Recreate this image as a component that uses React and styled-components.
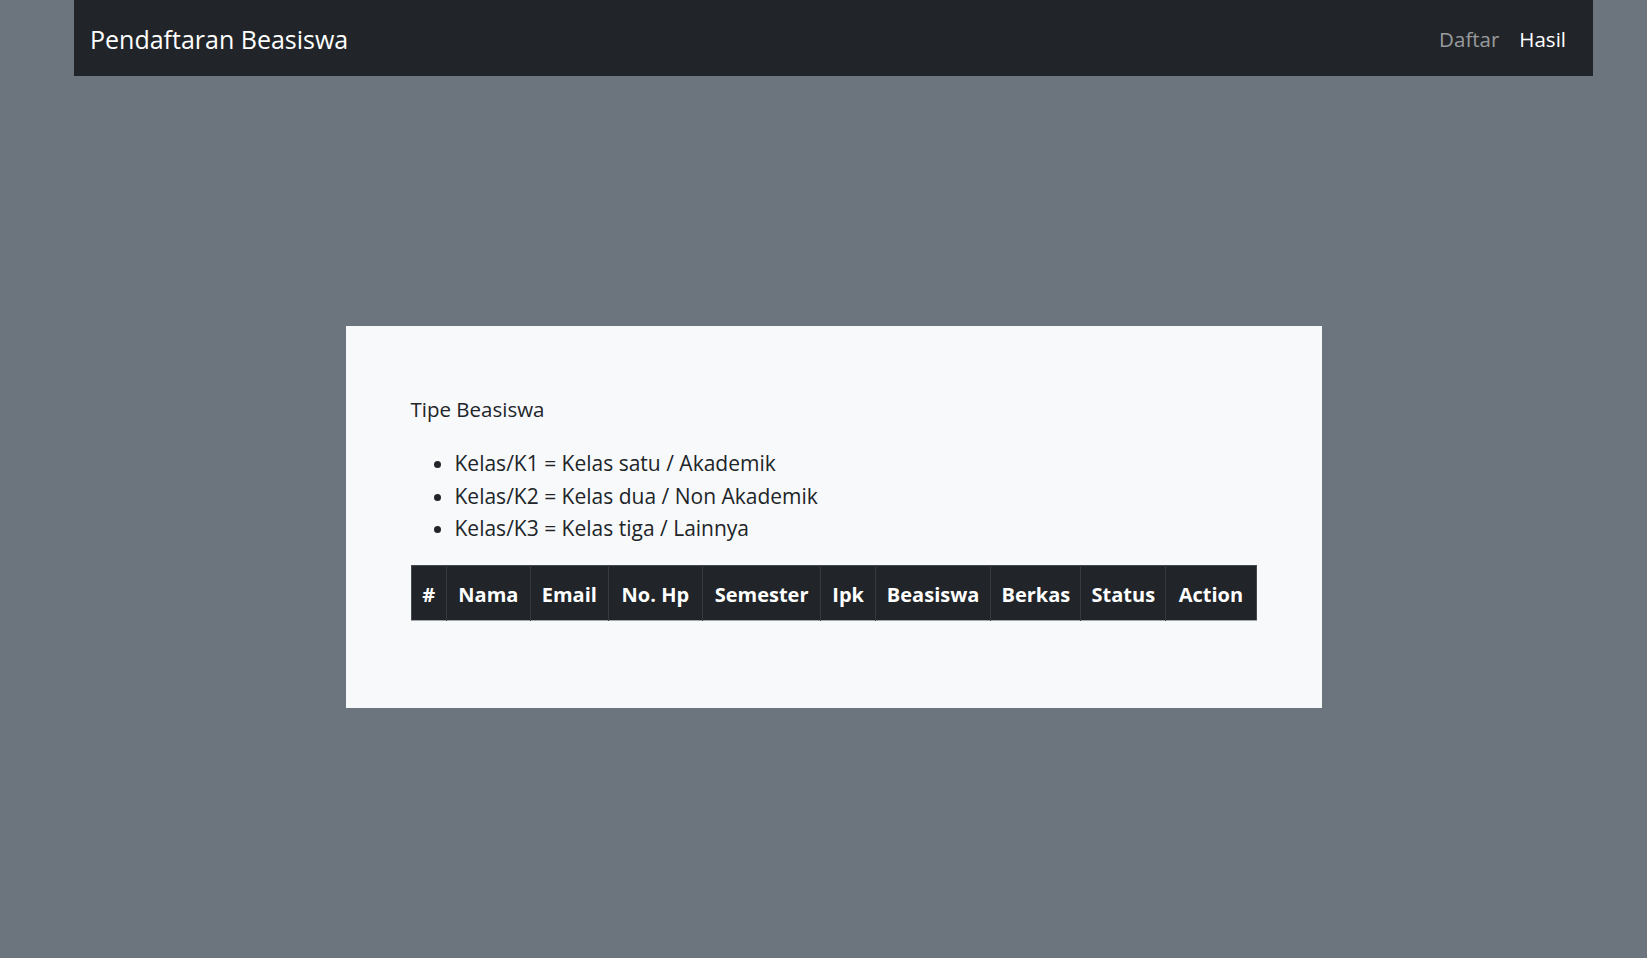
import styled, { createGlobalStyle } from "styled-components";

const GlobalStyle = createGlobalStyle`
  html, body {
    margin: 0;
    padding: 0;
    background: #6c757d;
    font-family: "Open Sans", "Noto Sans", sans-serif;
    color: #212529;
  }
`;

const Page = styled.div`
  width: 1519px;
  margin-left: 74px;
  min-height: 958px;
`;

const Navbar = styled.nav`
  height: 76px;
  background: #212529;
  display: flex;
  align-items: center;
  justify-content: space-between;
  padding: 2px 17px 0 16px;
  box-sizing: border-box;
`;

const Brand = styled.a`
  color: #fff;
  font-size: 25px;
  text-decoration: none;
`;

const NavLinks = styled.ul`
  list-style: none;
  margin: 0;
  padding: 0;
  display: flex;
`;

const NavLink = styled.li`
  font-size: 20.5px;
  padding: 0 10px;
  color: ${(p) => (p.$active ? "#fff" : "rgba(255,255,255,0.55)")};
`;

const Main = styled.main`
  display: flex;
  justify-content: center;
  padding-top: 250px;
`;

const Card = styled.section`
  width: 976px;
  height: 382px;
  background: #f8f9fa;
  box-sizing: border-box;
  padding: 67px 65px 0 65px;
`;

const Heading = styled.p`
  font-size: 20.5px;
  line-height: 32px;
  margin: 0 0 22px;
`;

const TypeList = styled.ul`
  margin: 0 0 20px;
  padding-left: 44px;
  font-size: 21px;
  line-height: 32.5px;
`;

const Table = styled.table`
  width: 846px;
  border-collapse: collapse;
  table-layout: fixed;
  background: #212529;
  color: #fff;
  border: 1px solid #454a4f;
  border-bottom: 1px solid #a3a7ab;
`;

const HeadCell = styled.th`
  width: ${(p) => p.$w}px;
  height: 55px;
  padding: 3px 0 0;
  box-sizing: border-box;
  font-size: 20px;
  font-weight: 700;
  text-align: center;
  border-left: 1px solid #373b3e;
  &:first-child {
    border-left: none;
  }
`;

const columns = [
  ["#", 35],
  ["Nama", 83],
  ["Email", 77],
  ["No. Hp", 93],
  ["Semester", 117],
  ["Ipk", 54],
  ["Beasiswa", 114],
  ["Berkas", 89],
  ["Status", 84],
  ["Action", 89],
];

const App = () => {
  return (
    <Page>
      <GlobalStyle />
      <Navbar>
        <Brand href="#">Pendaftaran Beasiswa</Brand>
        <NavLinks>
          <NavLink>Daftar</NavLink>
          <NavLink $active>Hasil</NavLink>
        </NavLinks>
      </Navbar>
      <Main>
        <Card>
          <Heading>Tipe Beasiswa</Heading>
          <TypeList>
            <li>Kelas/K1 = Kelas satu / Akademik</li>
            <li>Kelas/K2 = Kelas dua / Non Akademik</li>
            <li>Kelas/K3 = Kelas tiga / Lainnya</li>
          </TypeList>
          <Table>
            <thead>
              <tr>
                {columns.map(([label, w]) => (
                  <HeadCell key={label} $w={w}>
                    {label}
                  </HeadCell>
                ))}
              </tr>
            </thead>
            <tbody></tbody>
          </Table>
        </Card>
      </Main>
    </Page>
  );
};

export default App;
